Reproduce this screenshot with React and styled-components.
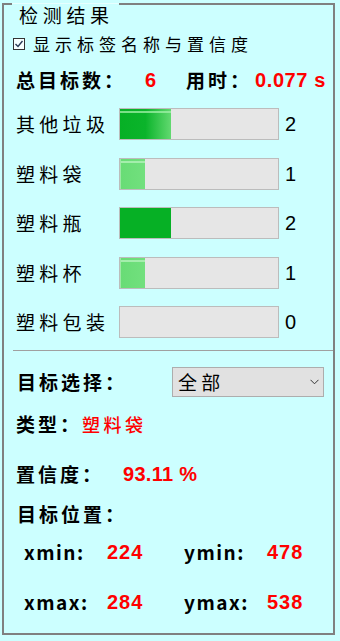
import React from 'react';
import styled, { createGlobalStyle } from 'styled-components';

const GlobalStyle = createGlobalStyle`
  html, body { margin: 0; padding: 0; background: #ccffff; }
  body { font-family: "Noto Sans CJK SC", sans-serif; color: #000; }
`;

const Frame = styled.div`
  box-sizing: border-box;
  width: 333px;
  height: 632px;
  margin: 3px 0 0 2px;
  border: 2px solid #808080;
  display: flex;
  flex-direction: column;
`;

const Title = styled.div`
  box-sizing: border-box;
  margin: -2px 0 0 8px;
  width: 107px;
  height: 23px;
  padding-left: 7px;
  background: #ccffff;
  border-top: 1px solid #e6ffff;
  font-size: 19px;
  line-height: 22px;
  letter-spacing: 4.7px;
  white-space: nowrap;
`;

const CheckRow = styled.div`
  display: flex;
  align-items: center;
  height: 20px;
  margin-top: 8px;
  padding-left: 9px;
  gap: 8px;
`;

const CheckBox = styled.span`
  box-sizing: border-box;
  width: 12px;
  height: 12px;
  border: 1px solid #333;
  background: #f6ffff;
  display: flex;
  align-items: center;
  justify-content: center;
`;

const CheckLabel = styled.span`
  font-size: 17px;
  letter-spacing: 5px;
  line-height: 20px;
  white-space: nowrap;
`;

const Row = styled.div`
  display: flex;
  align-items: center;
  height: ${p => p.$h || 24}px;
  margin-top: ${p => p.$mt}px;
  padding-left: ${p => p.$pl}px;
  white-space: nowrap;
`;

const Label = styled.span`
  font-weight: 700;
  font-size: 19px;
  letter-spacing: 3px;
  line-height: 24px;
  width: ${p => (p.$w ? `${p.$w}px` : 'auto')};
  flex: none;
`;

const RedNum = styled.span`
  font-family: "Liberation Sans", Arial, sans-serif;
  font-weight: 700;
  font-size: 20px;
  line-height: 24px;
  letter-spacing: ${p => p.$ls || 0}px;
  color: #ff0000;
  width: ${p => (p.$w ? `${p.$w}px` : 'auto')};
  flex: none;
`;

const RedText = styled.span`
  font-size: 18px;
  font-weight: 500;
  letter-spacing: 3.5px;
  line-height: 24px;
  color: #ff0000;
`;

const Bars = styled.div`
  display: flex;
  flex-direction: column;
  gap: 17.5px;
  margin-top: 16px;
  padding-left: 12px;
`;

const BarRow = styled.div`
  display: grid;
  grid-template-columns: 103px 160px auto;
  align-items: center;
  height: 32px;
`;

const BarLabel = styled.span`
  font-size: 19px;
  letter-spacing: 4.3px;
  line-height: 24px;
  white-space: nowrap;
`;

const Track = styled.div`
  box-sizing: border-box;
  height: 32px;
  border: 1px solid #bcbcbc;
  background: #e6e6e6;
  display: flex;
`;

const fills = {
  glow: `
    background:
      linear-gradient(to bottom, transparent 0, transparent 2px, rgba(160,240,168,0.75) 2px, rgba(160,240,168,0.75) 4px, transparent 4px),
      linear-gradient(to right, #06b025 0%, #0bb42b 50%, #62d970 100%);
  `,
  light: `
    background:
      linear-gradient(to bottom, transparent 0, transparent 2px, #a4eeac 2px, #a4eeac 4px, transparent 4px),
      linear-gradient(to right, #68dc75 0%, #72e07e 100%);
    box-shadow: inset 1px 0 0 #9ee8a6;
  `,
  solid: `background: #06b025;`,
};

const Fill = styled.div`
  height: 100%;
  ${p => fills[p.$kind] || ''}
`;

const Count = styled.span`
  font-family: "Liberation Sans", Arial, sans-serif;
  font-size: 20px;
  line-height: 24px;
  margin-left: 6px;
`;

const Separator = styled.div`
  height: 1px;
  margin: 12px 0 0 9px;
  background: #a0a0a0;
`;

const Combo = styled.div`
  box-sizing: border-box;
  width: 152px;
  height: 30px;
  border: 1px solid #adadad;
  background: #e1e1e1;
  display: flex;
  align-items: center;
  justify-content: space-between;
  padding: 0 4px 0 5px;
  font-size: 19px;
  letter-spacing: 4.3px;
  line-height: 24px;
`;

const CoordLabel = styled.span`
  font-weight: 700;
  font-size: 19px;
  letter-spacing: 1.5px;
  line-height: 24px;
  width: ${p => p.$w}px;
  flex: none;
`;

const bars = [
  { name: '其他垃圾', value: 2, kind: 'glow' },
  { name: '塑料袋', value: 1, kind: 'light' },
  { name: '塑料瓶', value: 2, kind: 'solid' },
  { name: '塑料杯', value: 1, kind: 'light' },
  { name: '塑料包装', value: 0, kind: 'solid' },
];

export default function App() {
  return (
    <>
      <GlobalStyle />
      <Frame>
        <Title>检测结果</Title>
        <CheckRow>
          <CheckBox>
            <svg width="10" height="10" viewBox="0 0 10 10">
              <path d="M1.5 5 L4 7.5 L8.5 2" fill="none" stroke="#2a3a55" strokeWidth="1.4" />
            </svg>
          </CheckBox>
          <CheckLabel>显示标签名称与置信度</CheckLabel>
        </CheckRow>
        <Row $mt={14} $pl={12}>
          <Label $w={129}>总目标数：</Label>
          <RedNum $w={41}>6</RedNum>
          <Label $w={69}>用时：</Label>
          <RedNum $ls={0.6}>0.077 s</RedNum>
        </Row>
        <Bars>
          {bars.map(b => (
            <BarRow key={b.name}>
              <BarLabel>{b.name}</BarLabel>
              <Track>
                {b.value > 0 && <Fill $kind={b.kind} style={{ width: `${b.value * 16}%` }} />}
              </Track>
              <Count>{b.value}</Count>
            </BarRow>
          ))}
        </Bars>
        <Separator />
        <Row $mt={16} $pl={13} $h={30}>
          <Label $w={155}>目标选择：</Label>
          <Combo>
            <span>全部</span>
            <svg width="9" height="6" viewBox="0 0 9 6">
              <path d="M0.5 0.8 L4.5 4.8 L8.5 0.8" fill="none" stroke="#333" strokeWidth="1" />
            </svg>
          </Combo>
        </Row>
        <Row $mt={15} $pl={12}>
          <Label>类型：</Label>
          <RedText>塑料袋</RedText>
        </Row>
        <Row $mt={26} $pl={12}>
          <Label $w={107}>置信度：</Label>
          <RedNum $ls={0.3}>93.11 %</RedNum>
        </Row>
        <Row $mt={16} $pl={13}>
          <Label>目标位置：</Label>
        </Row>
        <Row $mt={14} $pl={20}>
          <CoordLabel $w={83}>xmin:</CoordLabel>
          <RedNum $w={77} $ls={1}>224</RedNum>
          <CoordLabel $w={83}>ymin:</CoordLabel>
          <RedNum $ls={1}>478</RedNum>
        </Row>
        <Row $mt={26} $pl={20}>
          <CoordLabel $w={83}>xmax:</CoordLabel>
          <RedNum $w={77} $ls={1}>284</RedNum>
          <CoordLabel $w={83}>ymax:</CoordLabel>
          <RedNum $ls={1}>538</RedNum>
        </Row>
      </Frame>
    </>
  );
}
